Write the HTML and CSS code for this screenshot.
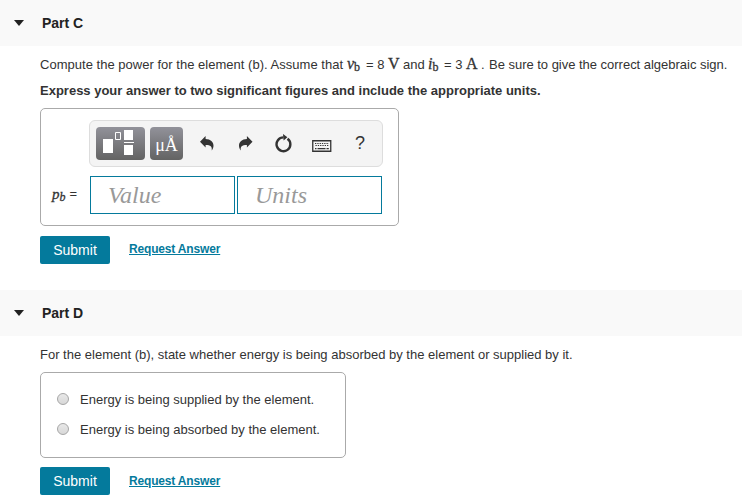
FILE: index.html
```html
<!DOCTYPE html>
<html lang="en">
<head>
    <meta charset="UTF-8">
    <meta name="viewport" content="width=device-width, initial-scale=1.0">
    <title>Part C and Part D</title>
    <link rel="stylesheet" href="styles.css">
</head>
<body>
    <section class="part">
        <h2 class="part-header"><span class="arrow"></span>Part C</h2>
        <div class="part-body">
            <p class="question question-c">
                <span class="q-start">Compute the power for the element (b). Assume that</span>
                <span class="math var-v"><i>v</i><sub>b</sub></span>
                <span class="eq">= 8</span>
                <span class="math unit-v">V</span>
                <span class="and">and</span>
                <span class="math var-i"><i>i</i><sub>b</sub></span>
                <span class="eq">= 3</span>
                <span class="math unit-a">A</span>
                <span class="dot">.</span>
                <span class="q-end">Be sure to give the correct algebraic sign.</span>
            </p>
            <p class="instructions">Express your answer to two significant figures and include the appropriate units.</p>
            <div class="answer-box">
                <div class="toolbar">
                    <button class="tool templates" aria-label="Templates">
                        <svg width="49" height="33" viewBox="0 0 49 33">
                            <path fill="#fff" d="M7 12h10v14H7zM28 3h9v10h-9zM28 18h9v10h-9zM28 15h10v1H28z"/>
                            <path fill="none" stroke="#fff" d="M19.5 5.500h5v7h-5z"/>
                        </svg>
                    </button>
                    <button class="tool symbols">μÅ</button>
                    <button class="icon undo" aria-label="Undo">
                        <svg width="14" height="15" viewBox="0 0 14 15"><path d="M0 5.700 5.600 0v3C10.500 3 13.500 6 13.500 9.700c0 1.800-.7 3.400-1.800 4.700.6-3.900-1-5.400-6.100-5.400v2.500z"/></svg>
                    </button>
                    <button class="icon redo" aria-label="Redo">
                        <svg width="14" height="15" viewBox="0 0 14 15"><path d="M13.500 5.700 7.900 0v3C3 3 0 6 0 9.700c0 1.800.7 3.400 1.800 4.700-.6-3.900 1-5.400 6.100-5.400v2.500z"/></svg>
                    </button>
                    <button class="icon reset" aria-label="Reset">
                        <svg width="17" height="19" viewBox="0 0 17 19">
                            <path d="M12.500 4.700A6.900 6.900 0 1 1 8.500 3.400" fill="none" stroke="#333" stroke-width="2.400"/>
                            <path d="M8 0 12.400 3.200 8.600 6.600z"/>
                        </svg>
                    </button>
                    <button class="icon keyboard" aria-label="Keyboard">
                        <svg width="20" height="12" viewBox="0 0 20 12">
                            <path d="M.75.75h18v10.500H.75z" fill="none" stroke="#333" stroke-width="1.300"/>
                            <path d="M3 3.500h14M3.500 5.500h13" fill="none" stroke="#333" stroke-width="1.200" stroke-dasharray="1.300 1"/>
                            <path d="M3 8h1.500v1.200H3zM5.500 8h8v1.200h-8zM14.500 8h2.300v1.200h-2.300z"/>
                        </svg>
                    </button>
                    <button class="icon help">?</button>
                </div>
                <div class="answer-row">
                    <label class="math answer-label"><i>p<sub>b</sub></i><span class="answer-eq">=</span></label>
                    <input class="field" type="text" placeholder="Value">
                    <input class="field" type="text" placeholder="Units">
                </div>
            </div>
            <div class="actions">
                <button class="submit">Submit</button>
                <a class="request" href="#">Request Answer</a>
            </div>
        </div>
    </section>

    <section class="part part-last">
        <h2 class="part-header"><span class="arrow"></span>Part D</h2>
        <div class="part-body">
            <p class="question">For the element (b), state whether energy is being absorbed by the element or supplied by it.</p>
            <div class="choices">
                <label class="choice"><input type="radio" name="energy">Energy is being supplied by the element.</label>
                <label class="choice"><input type="radio" name="energy">Energy is being absorbed by the element.</label>
            </div>
            <div class="actions">
                <button class="submit">Submit</button>
                <a class="request" href="#">Request Answer</a>
            </div>
        </div>
    </section>
</body>
</html>
```
FILE: styles.css
```css
* {
    box-sizing: border-box;
}
body {
    margin: 0;
    background-color: #fff;
    color: #333;
    font-family: "Liberation Sans", Arial, sans-serif;
    font-size: 13px;
}
p, h2 {
    margin: 0;
}
button {
    border: none;
    padding: 0;
    font-family: inherit;
    cursor: pointer;
}
.part {
    height: 290px;
}
.part-last {
    height: 211px;
}
.part-header {
    display: flex;
    align-items: center;
    height: 46px;
    padding-left: 14px;
    background-color: #f9f9f9;
    color: #222;
    font-size: 14px;
}
.arrow {
    margin-right: 18px;
    border: 5px solid transparent;
    border-top: 6px solid #222;
    border-bottom: none;
}
.part-body {
    padding: 9px 0 0 40px;
}
.question {
    height: 27px;
    line-height: 20px;
    white-space: nowrap;
}
.question-c {
    display: flex;
}
.math {
    font-family: "Liberation Serif", "Times New Roman", serif;
}
.math sub {
    font-size: 12px;
    line-height: 0;
    vertical-align: -2px;
}
.q-start {
    width: 307px;
    letter-spacing: 0.02px;
}
.var-v, .var-i {
    width: 19px;
    font-size: 16px;
    line-height: 18px;
    -webkit-text-stroke: 0.3px #333;
}
.var-i {
    width: 16px;
}
.eq {
    width: 22px;
}
.unit-v, .unit-a {
    width: 15px;
    font-size: 16px;
    line-height: 18px;
    -webkit-text-stroke: 0.3px #333;
}
.and {
    width: 25px;
}
.dot {
    width: 8px;
}
.instructions {
    height: 26px;
    line-height: 18px;
    font-weight: bold;
}
.q-end {
    letter-spacing: -0.02px;
}
.answer-box {
    width: 359px;
    height: 118px;
    padding: 11px 0 0 9px;
    border: 1px solid #aaa;
    border-radius: 5px;
}
.toolbar {
    display: flex;
    align-items: center;
    width: 294px;
    height: 47px;
    margin-left: 39px;
    padding-left: 6px;
    background-color: #f4f4f4;
    border: 1px solid #ddd;
    border-radius: 6px;
}
.tool {
    width: 49px;
    height: 33px;
    border-radius: 4px;
    background: linear-gradient(#92929a, #636363);
    color: #fff;
}
.tool svg, .icon svg {
    display: block;
}
.symbols {
    width: 33px;
    margin-left: 5px;
    padding-top: 3px;
    font-family: "Liberation Serif", serif;
    font-size: 18px;
}
.icon {
    background: none;
    color: #333;
    fill: #333;
}
.undo {
    margin-left: 17px;
}
.redo {
    margin-left: 25px;
}
.reset {
    margin-left: 22px;
}
.keyboard {
    margin: 4px 0 0 20px;
}
.help {
    margin-left: 23px;
    font-size: 18px;
}
.answer-row {
    display: flex;
    gap: 2px;
    margin-top: 9px;
}
.answer-label {
    width: 38px;
    padding-left: 2px;
    line-height: 36px;
    font-size: 15px;
    -webkit-text-stroke: 0.3px #333;
}
.answer-eq {
    margin-left: 4px;
    font-family: "Liberation Sans", Arial, sans-serif;
    font-size: 13px;
    vertical-align: 1px;
    -webkit-text-stroke: 0;
}
.field {
    width: 145px;
    height: 38px;
    padding: 0 17px;
    border: 1px solid #047a9c;
    font: italic 24px "Liberation Serif", "Times New Roman", serif;
}
.field::placeholder {
    color: #999;
}
.actions {
    display: flex;
    align-items: center;
    gap: 19px;
    margin-top: 10px;
}
.submit {
    width: 70px;
    height: 28px;
    border-radius: 2px;
    background-color: #047a9c;
    color: #fff;
    font-size: 14px;
}
.request {
    margin-top: -3px;
    color: #047a9c;
    font-size: 12px;
    font-weight: bold;
    letter-spacing: -0.17px;
}
.choices {
    display: flex;
    flex-direction: column;
    gap: 14px;
    width: 306px;
    height: 86px;
    padding: 18px 16px;
    border: 1px solid #aaa;
    border-radius: 5px;
}
.choice {
    display: flex;
    align-items: center;
    height: 16px;
}
.choice input {
    appearance: none;
    width: 12px;
    height: 12px;
    margin: 0 11px 0 0;
    border: 1px solid #a6a6a6;
    border-radius: 50%;
    background: linear-gradient(#e8e8e8, #d8d8d8);
}
.part-last .actions {
    margin-top: 9px;
}
.part-last .request {
    margin-top: -1px;
}
```
